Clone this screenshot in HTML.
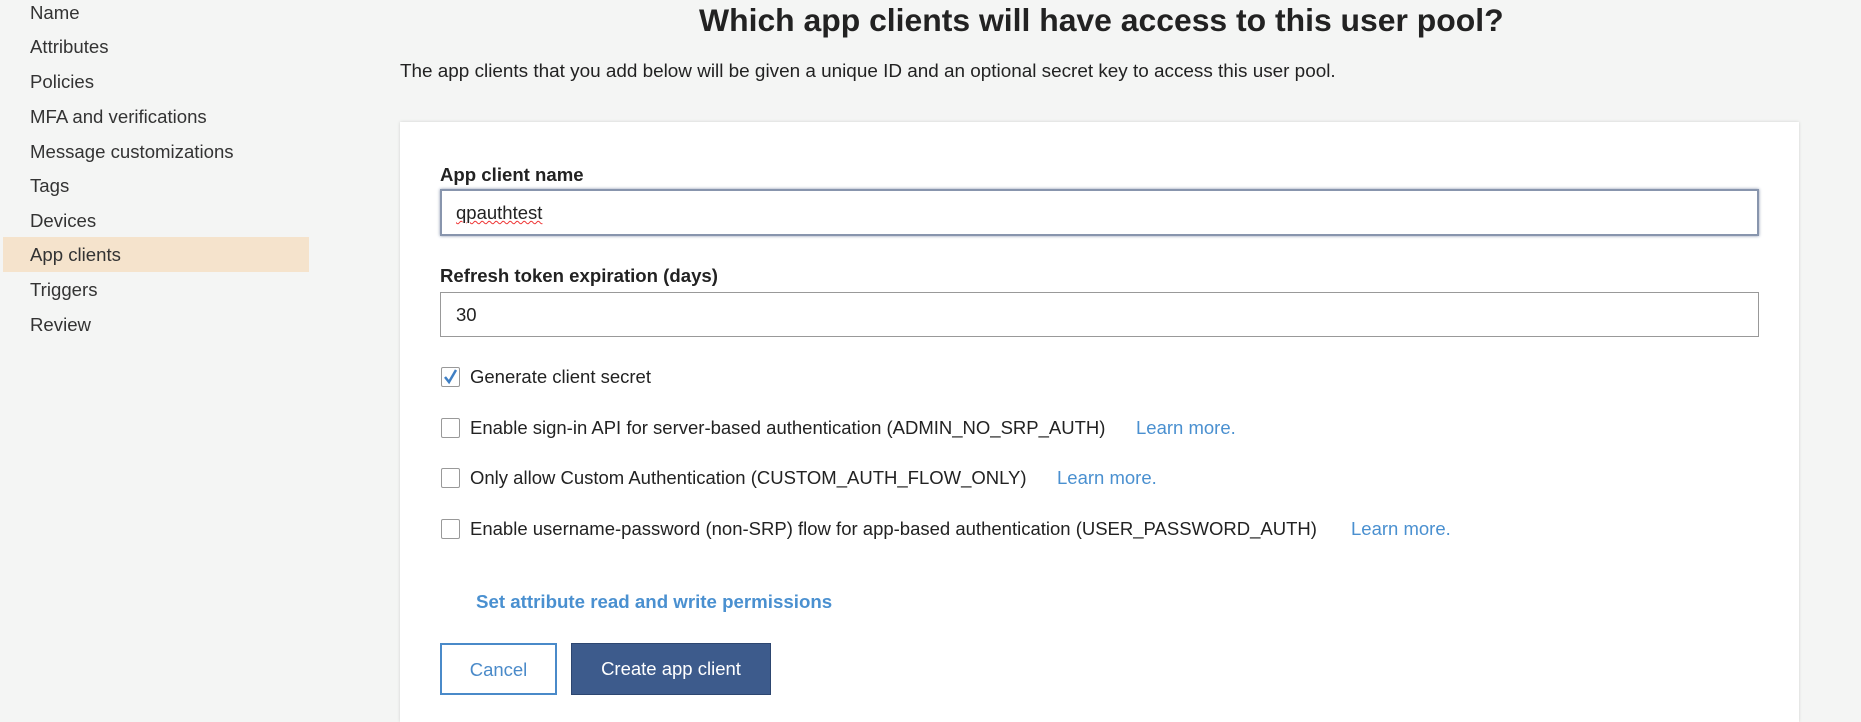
<!DOCTYPE html>
<html><head><meta charset="utf-8"><style>
*{margin:0;padding:0;box-sizing:border-box}
body{width:1861px;height:702px;background:#f4f5f4;font-family:"Liberation Sans",Arial,sans-serif;color:#222;position:relative;overflow:hidden}
.side{position:absolute;left:0;top:0;width:310px}
.side div{position:absolute;left:3px;width:306px;height:35px;line-height:35px;padding-left:27px;font-size:18.6px;color:#333}
.side .act{background:#f5e3cc}
h1{position:absolute;left:699px;top:2px;font-size:31.9px;font-weight:bold;color:#222;white-space:nowrap}
.sub{position:absolute;left:400px;top:61px;font-size:18.9px;color:#222;white-space:nowrap}
.panel{position:absolute;left:400px;top:122px;width:1399px;height:600px;background:#fff;box-shadow:0 0 3px rgba(0,0,0,.15)}
.lbl{position:absolute;left:440px;font-size:18.6px;font-weight:bold;color:#222}
.inp{position:absolute;left:440px;width:1319px;border:1px solid #999;background:#fff;font-size:18.5px;padding-left:15px}
.foc{border:2px solid #8895ad;box-shadow:0 0 3px #8895ad}
.cb{position:absolute;left:441px;width:19px;height:20px;border:1px solid #999;border-radius:2px;background:#fff}
.ct{position:absolute;left:470px;font-size:18.5px;color:#222;white-space:nowrap}
.lm{position:absolute;font-size:18.5px;color:#4a90d0;white-space:nowrap}
.btn{position:absolute;top:643px;height:52px;line-height:50px;text-align:center;font-size:18.5px}
</style></head><body>
<div class="side">
<div style="top:-5px">Name</div>
<div style="top:29px">Attributes</div>
<div style="top:64px">Policies</div>
<div style="top:99px">MFA and verifications</div>
<div style="top:134px">Message customizations</div>
<div style="top:168px">Tags</div>
<div style="top:203px">Devices</div>
<div class="act" style="top:237px">App clients</div>
<div style="top:272px">Triggers</div>
<div style="top:307px">Review</div>
</div>
<h1>Which app clients will have access to this user pool?</h1>
<div class="sub">The app clients that you add below will be given a unique ID and an optional secret key to access this user pool.</div>
<div class="panel"></div>
<div class="lbl" style="top:164px">App client name</div>
<div class="inp foc" style="top:189px;height:47px;line-height:43px;padding-left:14px"><span style="text-decoration:underline wavy #e33;text-decoration-thickness:1px">qpauthtest</span></div>
<div class="lbl" style="top:265px">Refresh token expiration (days)</div>
<div class="inp" style="top:292px;height:45px;line-height:43px">30</div>
<div class="cb" style="top:367px"><svg width="17" height="18" viewBox="0 0 17 18"><path d="M3 9 L7 14 L14 2" fill="none" stroke="#3f7fc4" stroke-width="2.5"/></svg></div>
<div class="ct" style="top:366px">Generate client secret</div>
<div class="cb" style="top:418px"></div>
<div class="ct" style="top:417px">Enable sign-in API for server-based authentication (ADMIN_NO_SRP_AUTH)</div>
<div class="lm" style="left:1136px;top:417px">Learn more.</div>
<div class="cb" style="top:468px"></div>
<div class="ct" style="top:467px">Only allow Custom Authentication (CUSTOM_AUTH_FLOW_ONLY)</div>
<div class="lm" style="left:1057px;top:467px">Learn more.</div>
<div class="cb" style="top:519px"></div>
<div class="ct" style="top:518px">Enable username-password (non-SRP) flow for app-based authentication (USER_PASSWORD_AUTH)</div>
<div class="lm" style="left:1351px;top:518px">Learn more.</div>
<div class="lm" style="left:476px;top:591px;font-weight:bold;font-size:18.7px">Set attribute read and write permissions</div>
<div class="btn" style="left:440px;width:117px;border:2px solid #4a8ac9;color:#4a8ac9;background:#fff">Cancel</div>
<div class="btn" style="left:571px;width:200px;background:#3d5b8c;color:#fff;border:1px solid #2d4670">Create app client</div>
</body></html>
